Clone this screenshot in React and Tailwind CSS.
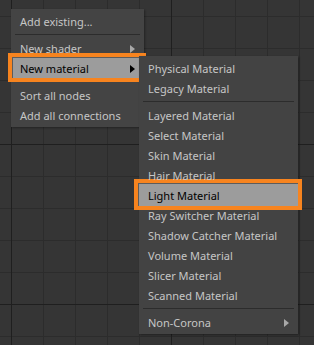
import React from "react";

const font = { fontFamily: '"Noto Sans", "Open Sans", sans-serif' };

function Arrow({ dark }) {
    return (
        <svg width="5" height="8" viewBox="0 0 5 8" className="shrink-0">
            <path d="M0 0 L5 4 L0 8 Z" fill={dark ? "#000000" : "#a8a8a8"} />
        </svg>
    );
}

function Item({ label, arrow, active, mark }) {
    return (
        <div className="relative flex h-[20px] items-center pl-[9px] pr-[9px]">
            {active && <span className={mark} />}
            <span className={"relative z-10 flex-1 " + (active ? "text-black" : "text-[#c6c6c6]")}>{label}</span>
            {arrow && (
                <span className="relative z-10 flex">
                    <Arrow dark={active} />
                </span>
            )}
        </div>
    );
}

function Separator() {
    return (
        <div className="flex h-[7px] items-start px-[4px] pt-[2px]">
            <div className="h-px w-full bg-[#2c2c2c]" />
        </div>
    );
}

export default function App() {
    const materials = [
        "Layered Material",
        "Select Material",
        "Skin Material",
        "Hair Material",
    ];
    const more = [
        "Ray Switcher Material",
        "Shadow Catcher Material",
        "Volume Material",
        "Slicer Material",
        "Scanned Material",
    ];

    return (
        <div
            className="relative h-[345px] w-[314px] overflow-hidden bg-[#353535] bg-[linear-gradient(to_right,#1f1f1f_1px,transparent_1px),linear-gradient(to_bottom,#1f1f1f_1px,transparent_1px),linear-gradient(to_right,#2c2c2c_1px,transparent_1px),linear-gradient(to_bottom,#2c2c2c_1px,transparent_1px)] bg-[size:160px_160px,160px_160px,32px_32px,32px_32px] bg-[position:11px_144px,11px_144px,11px_16px,11px_16px] text-[11px]"
            style={font}
        >
            {/* main context menu */}
            <div className="absolute left-[11px] top-[9px] w-[133px] bg-[#444444] pb-[1px] pt-[3px] shadow-[1px_1px_2px_rgba(0,0,0,0.35)]">
                <Item label="Add existing..." />
                <Separator />
                <Item label="New shader" arrow />
                <Item
                    label="New material"
                    arrow
                    active
                    mark="absolute -left-[3px] -right-[2px] -top-[6px] -bottom-[3px] border-4 border-[#f7841f] bg-[#9c9c9c] shadow-[inset_1px_1px_0_#5c5c5c]"
                />
                <Separator />
                <Item label="Sort all nodes" />
                <Item label="Add all connections" />
            </div>

            {/* material submenu */}
            <div className="absolute left-[139px] top-[56px] w-[159px] bg-[#434343] pb-[1px] pt-[3px] shadow-[1px_1px_2px_rgba(0,0,0,0.4)]">
                <Item label="Physical Material" />
                <Item label="Legacy Material" />
                <Separator />
                {materials.map((m) => (
                    <Item key={m} label={m} />
                ))}
                <Item
                    label="Light Material"
                    active
                    mark="absolute -left-[5px] -right-[4px] -top-[7px] -bottom-[4px] border-4 border-[#f7841f] bg-[#9c9c9c] shadow-[inset_1px_1px_0_#5c5c5c]"
                />
                {more.map((m) => (
                    <Item key={m} label={m} />
                ))}
                <Separator />
                <Item label="Non-Corona" arrow />
            </div>
        </div>
    );
}
